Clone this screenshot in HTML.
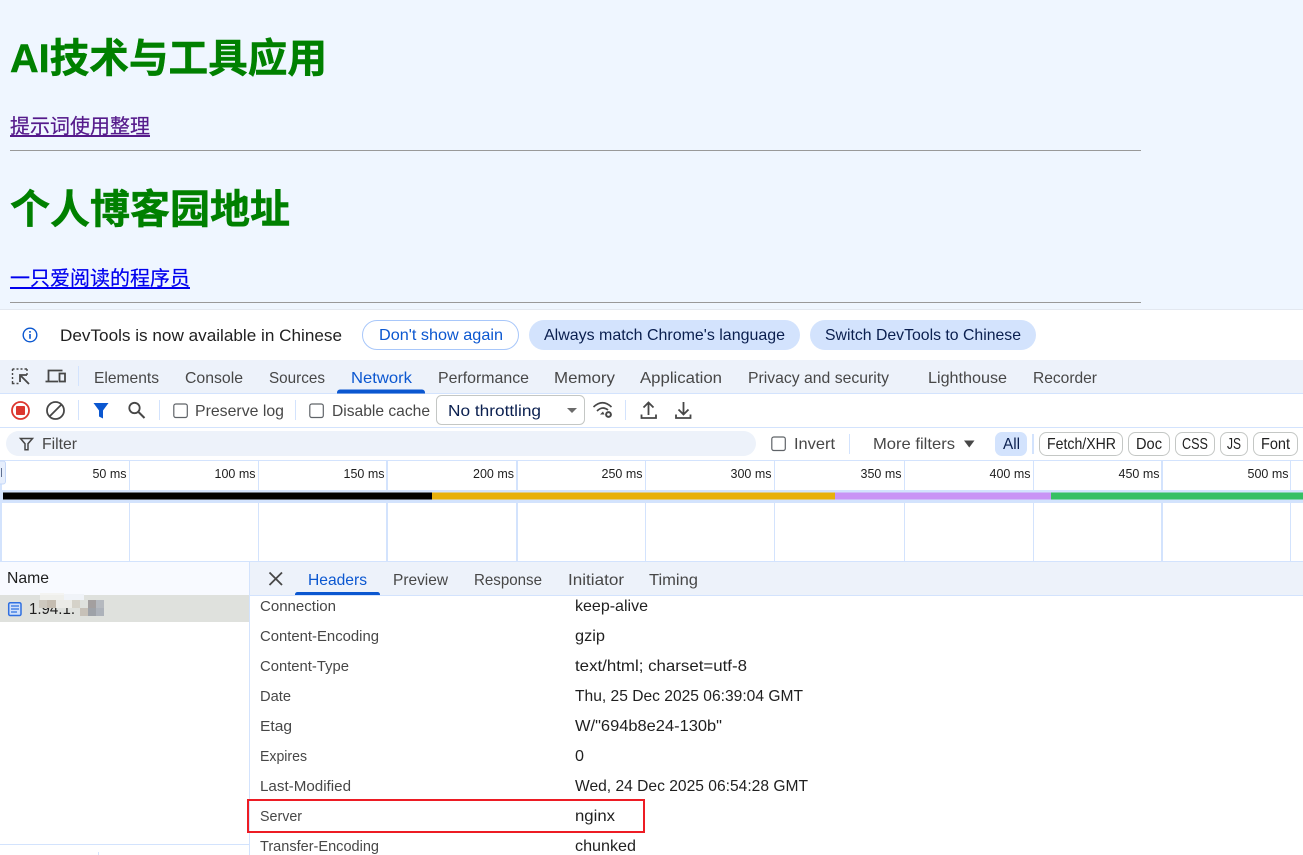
<!DOCTYPE html>
<html lang="en">
<head>
<meta charset="utf-8">
<title>DevTools</title>
<style>
html,body{margin:0;padding:0;width:1303px;height:855px;overflow:hidden;background:#fff}
svg{display:block}
text{font-family:"Liberation Sans","Noto Sans CJK SC",sans-serif;font-size:16px;fill:#474747;white-space:pre}
.cjk{font-family:"Noto Sans CJK SC","Liberation Sans",sans-serif}
.h1{font-size:40px;font-weight:700;fill:#008000;stroke:#008000;stroke-width:.5}
.lnk{font-size:20px;stroke-width:.2}
.t{fill:#474747}
.d{fill:#1f1f1f}
.b{fill:#0b57d0}
.n{fill:#0a1f4f}
.ms{font-size:12.5px;fill:#1f1f1f}
.hn{fill:#474747;font-size:15.2px}
.hv{fill:#1f1f1f;font-size:16px}
</style>
</head>
<body>
<svg width="1303" height="855" viewBox="0 0 1303 855" xmlns="http://www.w3.org/2000/svg">
<!-- page -->
<rect x="0" y="0" width="1303" height="309" fill="#eff6ff"/>
<text class="h1" x="10" y="72" textLength="317" lengthAdjust="spacingAndGlyphs">AI技术与工具应用</text>
<text class="lnk cjk" x="10" y="133" style="fill:#551a8b;stroke:#551a8b" textLength="140" lengthAdjust="spacingAndGlyphs">提示词使用整理</text>
<rect x="10" y="135" width="140" height="2" fill="#551a8b"/>
<rect x="10" y="150" width="1131" height="1" fill="#999"/>
<text class="h1 cjk" x="10" y="223" textLength="280" lengthAdjust="spacingAndGlyphs">个人博客园地址</text>
<text class="lnk cjk" x="10" y="285" style="fill:#0000ee;stroke:#0000ee" textLength="180" lengthAdjust="spacingAndGlyphs">一只爱阅读的程序员</text>
<rect x="10" y="287" width="180" height="2" fill="#0000ee"/>
<rect x="10" y="302" width="1131" height="1" fill="#999"/>
<rect x="0" y="309" width="1303" height="1" fill="#e3e8f0"/>

<!-- infobar -->
<rect x="0" y="310" width="1303" height="50" fill="#fff"/>
<circle cx="30" cy="335" r="6.8" fill="none" stroke="#0b57d0" stroke-width="1.4"/>
<rect x="29.2" y="334" width="1.6" height="4.8" fill="#0b57d0"/>
<rect x="29.2" y="331" width="1.6" height="1.7" fill="#0b57d0"/>
<text class="d" x="60" y="341" textLength="282" lengthAdjust="spacingAndGlyphs" style="font-size:16.5px">DevTools is now available in Chinese</text>
<rect x="362.5" y="320.5" width="156" height="29" rx="14.5" fill="#fff" stroke="#a8c7fa"/>
<text class="b" x="379" y="340" textLength="124" lengthAdjust="spacingAndGlyphs">Don't show again</text>
<rect x="529" y="320" width="271" height="30" rx="15" fill="#d3e3fd"/>
<text class="n" x="544" y="340" textLength="241" lengthAdjust="spacingAndGlyphs">Always match Chrome's language</text>
<rect x="810" y="320" width="226" height="30" rx="15" fill="#d3e3fd"/>
<text class="n" x="825" y="340" textLength="196" lengthAdjust="spacingAndGlyphs">Switch DevTools to Chinese</text>

<!-- tab bar -->
<rect x="0" y="360" width="1303" height="33" fill="#edf2fa"/>
<rect x="0" y="393" width="1303" height="1" fill="#d3e3fd"/>
<g fill="none" stroke="#474747">
<path d="M12.5 369h2M16.500 369h2M20.500 369h2M24.500 369h2.500M12.500 369v2M12.500 373v2M12.500 377v2M12.500 381v2.500h2M16.500 383.500h2M27 369v2M27 373v2" stroke-width="1.400"/>
<path d="M29 384l-8-8M20 382v-7h7" stroke-width="1.800"/>
</g>
<path d="M48.500 381v-10.500h14M45.500 381.500h12.500" fill="none" stroke="#474747" stroke-width="1.800"/>
<rect x="59.500" y="373.500" width="5.500" height="8" fill="none" stroke="#474747" stroke-width="1.800"/>
<rect x="78" y="366" width="1" height="20" fill="#d3e3fd"/>
<text class="t" x="94" y="383" textLength="65" lengthAdjust="spacingAndGlyphs">Elements</text>
<text class="t" x="185" y="383" textLength="58" lengthAdjust="spacingAndGlyphs">Console</text>
<text class="t" x="269" y="383" textLength="56" lengthAdjust="spacingAndGlyphs">Sources</text>
<text class="b" x="351" y="383" textLength="61" lengthAdjust="spacingAndGlyphs">Network</text>
<path d="M337 393.500v-1a3 3 0 0 1 3-3h82a3 3 0 0 1 3 3v1z" fill="#0b57d0"/>
<text class="t" x="438" y="383" textLength="91" lengthAdjust="spacingAndGlyphs">Performance</text>
<text class="t" x="554" y="383" textLength="61" lengthAdjust="spacingAndGlyphs">Memory</text>
<text class="t" x="640" y="383" textLength="82" lengthAdjust="spacingAndGlyphs">Application</text>
<text class="t" x="748" y="383" textLength="141" lengthAdjust="spacingAndGlyphs">Privacy and security</text>
<text class="t" x="928" y="383" textLength="79" lengthAdjust="spacingAndGlyphs">Lighthouse</text>
<text class="t" x="1033" y="383" textLength="64" lengthAdjust="spacingAndGlyphs">Recorder</text>

<!-- toolbar -->
<circle cx="20.500" cy="410.500" r="8.500" fill="none" stroke="#dc362e" stroke-width="1.800"/>
<rect x="16" y="406" width="9" height="9" rx="1" fill="#dc362e"/>
<circle cx="55.500" cy="410.500" r="8.500" fill="none" stroke="#474747" stroke-width="1.800"/>
<path d="M49.500 416.500l12-12" stroke="#474747" stroke-width="1.800"/>
<rect x="78" y="400" width="1" height="20" fill="#d3e3fd"/>
<path d="M93.500 403h15l-5.500 7.500v8l-4-2v-6z" fill="#0b57d0"/>
<circle cx="134.500" cy="408" r="5.200" fill="none" stroke="#474747" stroke-width="1.800"/>
<path d="M138.500 412l6 6" stroke="#474747" stroke-width="2"/>
<rect x="159" y="400" width="1" height="20" fill="#d3e3fd"/>
<rect x="173.800" y="404" width="13.500" height="13.500" rx="2" fill="#fff" stroke="#5f6368" stroke-width="1.200"/>
<text class="t" x="195" y="416" textLength="89" lengthAdjust="spacingAndGlyphs">Preserve log</text>
<rect x="295" y="400" width="1" height="20" fill="#d3e3fd"/>
<rect x="309.800" y="404" width="13.500" height="13.500" rx="2" fill="#fff" stroke="#5f6368" stroke-width="1.200"/>
<text class="t" x="332" y="416" textLength="98" lengthAdjust="spacingAndGlyphs">Disable cache</text>
<rect x="436.500" y="395.500" width="148" height="29" rx="5" fill="#fff" stroke="#c4c7c5"/>
<text class="n" x="448" y="416" textLength="93" lengthAdjust="spacingAndGlyphs">No throttling</text>
<path d="M567 408h10l-5 5z" fill="#6b6b6b"/>
<g fill="none" stroke="#474747" stroke-width="1.700">
<path d="M593.500 407Q602.500 398.500 611.500 407"/>
<path d="M597 411Q602.500 405.500 608 410"/>
</g>
<path d="M600 414.500l3-3 1.500 3z" fill="#474747"/>
<circle cx="608.500" cy="414.500" r="2.400" fill="none" stroke="#474747" stroke-width="2"/>
<rect x="625" y="400" width="1" height="20" fill="#d3e3fd"/>
<path d="M648.500 415v-12.500M643.500 407.500l5-5 5 5M641.500 414.500v3.500h14.500v-3.500" fill="none" stroke="#474747" stroke-width="1.800"/>
<path d="M683.500 402v12.500M678.500 409.500l5 5 5-5M676 414.500v3.500h14.500v-3.500" fill="none" stroke="#474747" stroke-width="1.800"/>
<rect x="0" y="427" width="1303" height="1" fill="#d3e3fd"/>

<!-- filter bar -->
<rect x="6" y="431" width="750" height="25" rx="12.500" fill="#edf2fa"/>
<path d="M20.500 438.500h12l-4.500 5.200v6h-3v-6z" fill="none" stroke="#474747" stroke-width="1.500"/>
<text class="t" x="42" y="449" textLength="35" lengthAdjust="spacingAndGlyphs">Filter</text>
<rect x="771.800" y="437" width="13.500" height="13.500" rx="2" fill="#fff" stroke="#5f6368" stroke-width="1.200"/>
<text class="t" x="794" y="449" textLength="41" lengthAdjust="spacingAndGlyphs">Invert</text>
<rect x="849" y="434" width="1" height="20" fill="#d3e3fd"/>
<text class="t" x="873" y="449" textLength="82" lengthAdjust="spacingAndGlyphs">More filters</text>
<path d="M964 440.500h10.500l-5.250 7z" fill="#474747"/>
<rect x="995" y="432" width="32" height="24" rx="7" fill="#d3e3fd"/>
<text class="n" x="1003" y="449" textLength="17" lengthAdjust="spacingAndGlyphs">All</text>
<rect x="1032" y="434" width="2" height="20" fill="#d3e3fd"/>
<g fill="#fff" stroke="#c4c7c5">
<rect x="1039.500" y="432.500" width="83" height="23" rx="7"/>
<rect x="1128.500" y="432.500" width="41" height="23" rx="7"/>
<rect x="1175.500" y="432.500" width="39" height="23" rx="7"/>
<rect x="1220.500" y="432.500" width="27" height="23" rx="7"/>
<rect x="1253.500" y="432.500" width="44" height="23" rx="7"/>
</g>
<text class="d" x="1047" y="449" textLength="69" lengthAdjust="spacingAndGlyphs">Fetch/XHR</text>
<text class="d" x="1136" y="449" textLength="26" lengthAdjust="spacingAndGlyphs">Doc</text>
<text class="d" x="1182" y="449" textLength="26" lengthAdjust="spacingAndGlyphs">CSS</text>
<text class="d" x="1227" y="449" textLength="14" lengthAdjust="spacingAndGlyphs">JS</text>
<text class="d" x="1261" y="449" textLength="29" lengthAdjust="spacingAndGlyphs">Font</text>

<!-- overview -->
<rect x="0" y="460" width="1303" height="1" fill="#d3e3fd"/>
<g fill="#d3e3fd">
<rect x="129" y="461" width="1" height="100"/>
<rect x="258" y="461" width="1" height="100"/>
<rect x="386" y="461" width="2" height="100"/>
<rect x="516" y="461" width="2" height="100"/>
<rect x="645" y="461" width="1" height="100"/>
<rect x="774" y="461" width="1" height="100"/>
<rect x="904" y="461" width="1" height="100"/>
<rect x="1033" y="461" width="1" height="100"/>
<rect x="1161" y="461" width="2" height="100"/>
<rect x="1290" y="461" width="1" height="100"/>
<rect x="0" y="490" width="1303" height="13"/>
<rect x="0" y="461" width="2" height="100"/>
<rect x="0" y="561" width="1303" height="1"/>
</g>
<rect x="3" y="492.500" width="429" height="7" fill="#000"/>
<rect x="432" y="492.500" width="403" height="7" fill="#e8b00a"/>
<rect x="835" y="492.500" width="216" height="7" fill="#c994f5"/>
<rect x="1051" y="492.500" width="252" height="7" fill="#36c063"/>
<rect x="-3" y="461" width="8.500" height="23" rx="2.500" fill="#e6eefc" stroke="#c6d8f8"/>
<rect x="1" y="468" width="1" height="9" fill="#5f6f90"/>
<text class="ms" x="126.500" y="478" text-anchor="end">50 ms</text>
<text class="ms" x="255.500" y="478" text-anchor="end">100 ms</text>
<text class="ms" x="384.500" y="478" text-anchor="end">150 ms</text>
<text class="ms" x="514" y="478" text-anchor="end">200 ms</text>
<text class="ms" x="642.500" y="478" text-anchor="end">250 ms</text>
<text class="ms" x="771.500" y="478" text-anchor="end">300 ms</text>
<text class="ms" x="901.500" y="478" text-anchor="end">350 ms</text>
<text class="ms" x="1030.500" y="478" text-anchor="end">400 ms</text>
<text class="ms" x="1159.500" y="478" text-anchor="end">450 ms</text>
<text class="ms" x="1288.500" y="478" text-anchor="end">500 ms</text>

<!-- name panel -->
<rect x="0" y="562" width="249" height="33" fill="#f8faff"/>
<text class="d" x="7" y="583" textLength="42" lengthAdjust="spacingAndGlyphs">Name</text>
<rect x="0" y="595" width="249" height="27" fill="#dfe1dd"/>
<rect x="8.700" y="602.700" width="12.300" height="12.800" rx="1.500" fill="#cfe0fb" stroke="#2f6fe0" stroke-width="1.500"/>
<path d="M11 606h8M11 609h8M11 612h6" stroke="#2f6fe0" stroke-width="1.200"/>
<text class="d" x="29" y="614" textLength="46" lengthAdjust="spacingAndGlyphs">1.94.1.</text>
<rect x="40" y="593" width="24" height="7" fill="#f2f2ef" opacity=".8"/>
<rect x="39" y="600" width="8" height="8" fill="#cdc8be"/>
<rect x="47" y="600" width="9" height="8" fill="#c4bcb0"/>
<rect x="56" y="600" width="16" height="8" fill="#ebebe7"/>
<rect x="72" y="600" width="8" height="8" fill="#d5d2c9"/>
<rect x="88" y="600" width="8" height="8" fill="#a39f9f"/>
<rect x="96" y="600" width="8" height="8" fill="#b5b9bf"/>
<rect x="80" y="608" width="8" height="8" fill="#c7c1b8"/>
<rect x="88" y="608" width="8" height="8" fill="#9ea2a8"/>
<rect x="96" y="608" width="8" height="8" fill="#adb2ba"/>
<rect x="64" y="594" width="20" height="6" fill="#f0f3f8"/>
<rect x="249" y="562" width="1" height="293" fill="#d3e3fd"/>
<rect x="0" y="844" width="249" height="1" fill="#d3e3fd"/>
<rect x="98" y="852" width="1" height="3" fill="#d3e3fd"/>

<!-- details tabs -->
<rect x="250" y="562" width="1053" height="33" fill="#edf2fa"/>
<rect x="250" y="595" width="1053" height="1" fill="#d3e3fd"/>
<path d="M269.500 572.500l12.500 12.500M282 572.500l-12.500 12.500" stroke="#474747" stroke-width="1.800" fill="none"/>
<text class="b" x="308" y="585" textLength="59" lengthAdjust="spacingAndGlyphs">Headers</text>
<path d="M295 595v-.5a2.500 2.500 0 0 1 2.500-2.500h80a2.500 2.500 0 0 1 2.500 2.500v.5z" fill="#0b57d0"/>
<text class="t" x="393" y="585" textLength="55" lengthAdjust="spacingAndGlyphs">Preview</text>
<text class="t" x="474" y="585" textLength="68" lengthAdjust="spacingAndGlyphs">Response</text>
<text class="t" x="568" y="585" textLength="56" lengthAdjust="spacingAndGlyphs">Initiator</text>
<text class="t" x="649" y="585" textLength="49" lengthAdjust="spacingAndGlyphs">Timing</text>

<!-- headers -->
<text class="hn" x="260" y="611" textLength="76" lengthAdjust="spacingAndGlyphs">Connection</text>
<text class="hv" x="575" y="611" textLength="73" lengthAdjust="spacingAndGlyphs">keep-alive</text>
<text class="hn" x="260" y="641" textLength="119" lengthAdjust="spacingAndGlyphs">Content-Encoding</text>
<text class="hv" x="575" y="641" textLength="30" lengthAdjust="spacingAndGlyphs">gzip</text>
<text class="hn" x="260" y="671" textLength="89" lengthAdjust="spacingAndGlyphs">Content-Type</text>
<text class="hv" x="575" y="671" textLength="172" lengthAdjust="spacingAndGlyphs">text/html; charset=utf-8</text>
<text class="hn" x="260" y="701" textLength="31" lengthAdjust="spacingAndGlyphs">Date</text>
<text class="hv" x="575" y="701" textLength="228" lengthAdjust="spacingAndGlyphs">Thu, 25 Dec 2025 06:39:04 GMT</text>
<text class="hn" x="260" y="731" textLength="32" lengthAdjust="spacingAndGlyphs">Etag</text>
<text class="hv" x="575" y="731" textLength="147" lengthAdjust="spacingAndGlyphs">W/"694b8e24-130b"</text>
<text class="hn" x="260" y="761" textLength="47" lengthAdjust="spacingAndGlyphs">Expires</text>
<text class="hv" x="575" y="761" textLength="9" lengthAdjust="spacingAndGlyphs">0</text>
<text class="hn" x="260" y="791" textLength="91" lengthAdjust="spacingAndGlyphs">Last-Modified</text>
<text class="hv" x="575" y="791" textLength="233" lengthAdjust="spacingAndGlyphs">Wed, 24 Dec 2025 06:54:28 GMT</text>
<text class="hn" x="260" y="821" textLength="42" lengthAdjust="spacingAndGlyphs">Server</text>
<text class="hv" x="575" y="821" textLength="40" lengthAdjust="spacingAndGlyphs">nginx</text>
<text class="hn" x="260" y="851" textLength="119" lengthAdjust="spacingAndGlyphs">Transfer-Encoding</text>
<text class="hv" x="575" y="851" textLength="61" lengthAdjust="spacingAndGlyphs">chunked</text>

<!-- annotation -->
<rect x="248" y="800" width="396" height="32" fill="none" stroke="#ed1c24" stroke-width="2"/>
</svg>
</body>
</html>
